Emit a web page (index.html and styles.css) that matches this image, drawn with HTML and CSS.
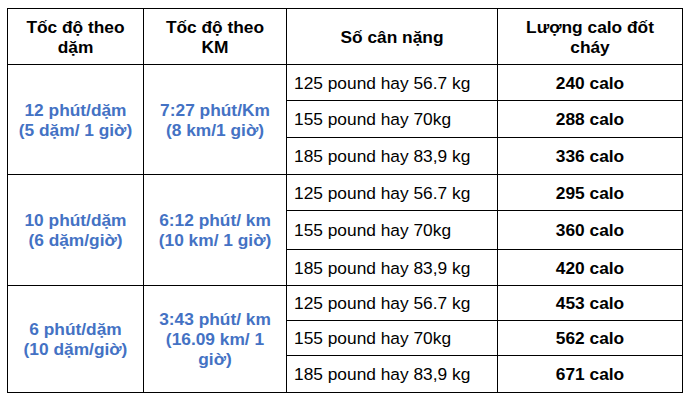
FILE: index.html
```html
<!DOCTYPE html>
<html lang="vi">
<head>
<meta charset="utf-8">
<title>Calo</title>
<link rel="stylesheet" href="styles.css">
</head>
<body>
<table class="calo">
  <colgroup>
    <col class="c1"><col class="c2"><col class="c3"><col class="c4">
  </colgroup>
  <thead>
    <tr class="head">
      <th>Tốc độ theo<br>dặm</th>
      <th>Tốc độ theo<br>KM</th>
      <th>Số cân nặng</th>
      <th>Lượng calo đốt<br>cháy</th>
    </tr>
  </thead>
  <tbody>
    <tr class="r1">
      <td rowspan="3" class="speed">12 phút/dặm<br>(5 dặm/ 1 giờ)</td>
      <td rowspan="3" class="speed">7:27 phút/Km<br>(8 km/1 giờ)</td>
      <td class="w">125 pound hay 56.7 kg</td>
      <td class="cal">240 calo</td>
    </tr>
    <tr class="r2"><td class="w">155 pound hay 70kg</td><td class="cal">288 calo</td></tr>
    <tr class="r3"><td class="w">185 pound hay 83,9 kg</td><td class="cal">336 calo</td></tr>
    <tr class="r4">
      <td rowspan="3" class="speed">10 phút/dặm<br>(6 dặm/giờ)</td>
      <td rowspan="3" class="speed">6:12 phút/ km<br>(10 km/ 1 giờ)</td>
      <td class="w">125 pound hay 56.7 kg</td>
      <td class="cal">295 calo</td>
    </tr>
    <tr class="r5"><td class="w">155 pound hay 70kg</td><td class="cal">360 calo</td></tr>
    <tr class="r6"><td class="w">185 pound hay 83,9 kg</td><td class="cal">420 calo</td></tr>
    <tr class="r7">
      <td rowspan="3" class="speed">6 phút/dặm<br>(10 dặm/giờ)</td>
      <td rowspan="3" class="speed">3:43 phút/ km<br>(16.09 km/ 1<br>giờ)</td>
      <td class="w">125 pound hay 56.7 kg</td>
      <td class="cal">453 calo</td>
    </tr>
    <tr class="r8"><td class="w">155 pound hay 70kg</td><td class="cal">562 calo</td></tr>
    <tr class="r9"><td class="w">185 pound hay 83,9 kg</td><td class="cal">671 calo</td></tr>
  </tbody>
</table>
</body>
</html>
```
FILE: styles.css
```css
html, body {
  margin: 0;
  padding: 0;
  background: #ffffff;
}
body {
  font-family: "Liberation Sans", Arial, sans-serif;
  font-size: 17.33px;
  color: #000000;
}
.calo {
  border-collapse: collapse;
  table-layout: fixed;
  margin: 8px 0 0 7px;
  width: 675px;
}
.c1 { width: 136px; }
.c2 { width: 143px; }
.c3 { width: 211px; }
.c4 { width: 185px; }
.calo th,
.calo td {
  border: 1px solid #000000;
  padding: 0 7px;
  vertical-align: middle;
  line-height: 20px;
}
.calo th {
  font-weight: bold;
  text-align: center;
}
.head { height: 56px; }
.r1 { height: 36px; }
.r2 { height: 37px; }
.r3 { height: 37px; }
.r4 { height: 36px; }
.r5 { height: 39px; }
.r6 { height: 36px; }
.r7 { height: 35px; }
.r8 { height: 35px; }
.r9 { height: 37px; }
.speed {
  color: #4472c4;
  font-weight: bold;
  text-align: center;
}
.w { text-align: left; }
.cal {
  font-weight: bold;
  text-align: center;
}
```
